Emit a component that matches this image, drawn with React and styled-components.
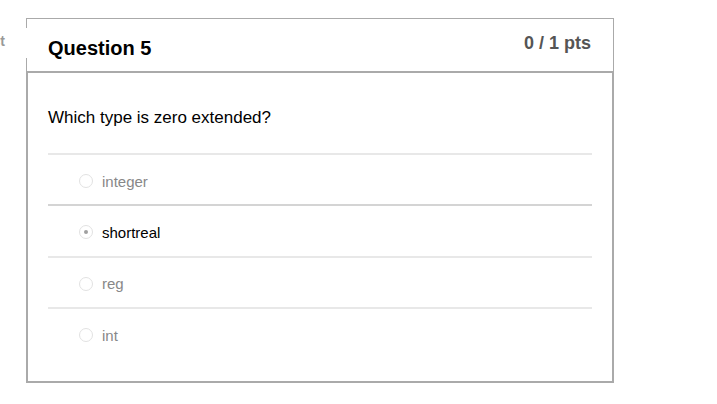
import React from "react";
import styled, { createGlobalStyle } from "styled-components";

const Global = createGlobalStyle`
  html, body { margin: 0; padding: 0; background: #fff; }
  body { font-family: "Liberation Sans", Arial, sans-serif; }
`;

const Page = styled.div`
  width: 717px;
  height: 404px;
  padding: 18px 0 0 26px;
  box-sizing: border-box;
  position: relative;
  overflow: hidden;
`;

const Card = styled.div`
  width: 588px;
  position: relative;
`;

const Flag = styled.div`
  position: absolute;
  top: 10px;
  right: calc(100% - 2px);
  height: 30px;
  box-sizing: border-box;
  padding: 4px 23px 0 0;
  background: #fff;
  font-size: 14px;
  line-height: 18px;
  font-weight: bold;
  color: #999;
  white-space: nowrap;
`;

const Header = styled.div`
  display: flex;
  justify-content: space-between;
  align-items: flex-start;
  height: 52px;
  border: 1px solid #aaa;
  border-bottom: none;
  padding: 0 22px 0 21px;
`;

const Title = styled.h2`
  margin: 18px 0 0;
  font-size: 20px;
  font-weight: bold;
  color: #000;
`;

const Points = styled.div`
  margin-top: 14px;
  font-size: 18px;
  font-weight: bold;
  color: #555;
`;

const Body = styled.div`
  border: 2px solid #aaa;
  padding: 35px 20px 23px;
`;

const QuestionText = styled.div`
  font-size: 17px;
  color: #000;
  line-height: 20px;
  padding-bottom: 25px;
`;

const Option = styled.div`
  display: flex;
  align-items: center;
  box-sizing: border-box;
  height: 51.34px;
  padding: 3px 0 0 31px;
  border-top: 2px solid ${(p) => (p.selected ? "#d4d4d4" : "#e8e8e8")};
  font-size: 15px;
  color: ${(p) => (p.selected ? "#000" : "#888")};
`;

const Radio = styled.span`
  width: 12px;
  height: 12px;
  border-radius: 50%;
  border: 1px solid #e2e2e2;
  margin-right: 9px;
  display: flex;
  align-items: center;
  justify-content: center;
  &::after {
    content: "";
    width: 4px;
    height: 4px;
    border-radius: 50%;
    background: ${(p) => (p.selected ? "#a0a0a0" : "transparent")};
  }
`;

const options = [
  { label: "integer" },
  { label: "shortreal", selected: true },
  { label: "reg" },
  { label: "int" },
];

export default function App() {
  return (
    <>
      <Global />
      <Page>
        <Card>
          <Flag>Incorrect</Flag>
          <Header>
            <Title>Question 5</Title>
            <Points>0 / 1 pts</Points>
          </Header>
          <Body>
            <QuestionText>Which type is zero extended?</QuestionText>
            {options.map((o) => (
              <Option key={o.label} selected={o.selected}>
                <Radio selected={o.selected} />
                {o.label}
              </Option>
            ))}
          </Body>
        </Card>
      </Page>
    </>
  );
}
